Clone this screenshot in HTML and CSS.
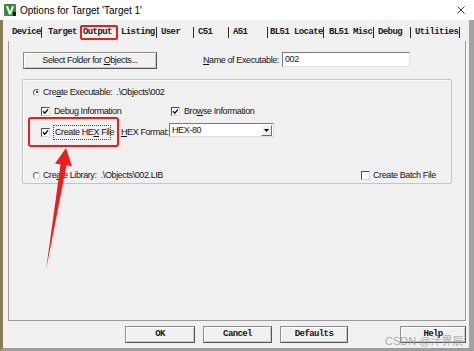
FILE: index.html
```html
<!DOCTYPE html>
<html lang="en">
<head>
    <meta charset="UTF-8">
    <meta name="viewport" content="width=device-width, initial-scale=1.0">
    <title>Options for Target</title>
    <link rel="stylesheet" href="styles.css">
</head>
<body>
    <div class="window">
        <div class="titlebar">
            <svg class="app-icon" viewBox="0 0 12 12">
                <rect x="0" y="0" width="12" height="12" rx="1" fill="#2f8f3f"/>
                <polygon points="2,2 4,2 6,7.5 8,2 10,2 7,10.5 5,10.5" fill="#fff"/>
                <rect x="9" y="8" width="3" height="4" fill="#1d1d1d"/>
            </svg>
            <span class="title">Options for Target 'Target 1'</span>
            <svg class="close" viewBox="0 0 8 8">
                <path d="M0.5 0.5 L7.5 7.5 M7.5 0.5 L0.5 7.5" stroke="#222" stroke-width="0.9"/>
            </svg>
        </div>
        <div class="frame">
            <div class="tabs">
                <span class="tab">Device</span>
                <span class="tab">Target</span>
                <span class="tab active">Output</span>
                <span class="tab">Listing</span>
                <span class="tab">User</span>
                <span class="tab">C51</span>
                <span class="tab">A51</span>
                <span class="tab">BL51 Locate</span>
                <span class="tab">BL51 Misc</span>
                <span class="tab">Debug</span>
                <span class="tab">Utilities</span>
            </div>
            <div class="panel">
                <div class="row-top">
                    <div class="btn btn-folder">Select Folder for <u>O</u>bjects...</div>
                    <span class="lbl-name"><u>N</u>ame of Executable:</span>
                    <div class="input">002</div>
                </div>
                <div class="group">
                    <div class="line">
                        <span class="radio on"></span>
                        <span>Cre<u>a</u>te Executable:&nbsp; .\Objects\002</span>
                    </div>
                    <div class="line line-info">
                        <span class="opt">
                            <span class="check"><svg viewBox="0 0 7 7"><path d="M1 3.2 L2.8 5.2 L6 1.3" stroke="#000" stroke-width="1.3" fill="none"/></svg></span>
                            <span>Debug Information</span>
                        </span>
                        <span class="opt">
                            <span class="check"><svg viewBox="0 0 7 7"><path d="M1 3.2 L2.8 5.2 L6 1.3" stroke="#000" stroke-width="1.3" fill="none"/></svg></span>
                            <span>Bro<u>w</u>se Information</span>
                        </span>
                    </div>
                    <div class="line line-hex">
                        <div class="mark">
                            <span class="check"><svg viewBox="0 0 7 7"><path d="M1 3.2 L2.8 5.2 L6 1.3" stroke="#000" stroke-width="1.3" fill="none"/></svg></span>
                            <span class="focus">Create HE<u>X</u> File</span>
                        </div>
                        <span class="lbl-hex"><u>H</u>EX Format:</span>
                        <div class="combo">
                            <span>HEX-80</span>
                            <span class="combo-btn"><svg viewBox="0 0 5 3"><polygon points="0,0 5,0 2.5,3" fill="#000"/></svg></span>
                        </div>
                    </div>
                    <div class="line line-lib">
                        <span class="radio"></span>
                        <span>Cre<u>a</u>te Library:&nbsp; .\Objects\002.LIB</span>
                        <span class="opt batch">
                            <span class="check"></span>
                            <span>Create Batch File</span>
                        </span>
                    </div>
                </div>
            </div>
            <div class="buttons">
                <div class="btn pb pb-ok">OK</div>
                <div class="btn pb pb-cancel">Cancel</div>
                <div class="btn pb pb-defaults">Defaults</div>
                <div class="btn pb pb-help">Help</div>
            </div>
        </div>
        <svg class="arrow" viewBox="0 0 474 351">
            <polygon points="66,148 72,166.5 66.5,165 46,270 60.5,164.5 55,163.5" fill="#ee1c1c"/>
        </svg>
        <div class="watermark">CSDN @汁界辰</div>
    </div>
</body>
</html>
```

FILE: styles.css
```css
* {
    box-sizing: border-box;
}
body {
    margin: 0;
    background-color: #fff;
}
.window {
    position: relative;
    width: 474px;
    height: 351px;
    overflow: hidden;
    background-color: #f0f0f0;
    font-family: "Liberation Sans", Arial, sans-serif;
    font-size: 9px;
    letter-spacing: -0.4px;
    color: #151515;
}
.titlebar {
    height: 20px;
    background-color: #fff;
    display: flex;
    align-items: center;
    padding-left: 4px;
    letter-spacing: 0;
}
.app-icon {
    width: 12px;
    height: 12px;
}
.title {
    margin-left: 4px;
    font-size: 10px;
    color: #000;
}
.close {
    margin-left: auto;
    margin-right: 9px;
    width: 8px;
    height: 8px;
}
.frame {
    height: 331px;
    border-left: 3px solid #8a7c55;
    border-right: 5px solid #a2a2a2;
    border-bottom: 3px solid #9d9d9d;
    padding: 0 3px 5px 5px;
}

/* tab strip */
.tabs {
    display: flex;
    align-items: center;
    height: 21px;
    padding-top: 4px;
    font-family: "Liberation Mono", "Courier New", monospace;
    font-weight: bold;
    font-size: 9px;
    letter-spacing: -0.6px;
    color: #1a1a1a;
}
.tab {
    height: 11px;
    line-height: 11px;
    padding-left: 4px;
    border-left: 1px solid #2a2a2a;
    white-space: nowrap;
}
.tab:first-child {
    border-left: 0;
}
.tab:last-child {
    border-right: 1px solid #2a2a2a;
}
.tab.active {
    height: 15px;
    margin: 0 1px;
    padding-left: 1px;
    border: 2px solid #e3201b;
    border-radius: 2px;
}
.tab.active + .tab {
    border-left: 0;
    padding-left: 2px;
}
.tab:nth-child(1) { width: 33px; }
.tab:nth-child(2) { width: 38px; padding-left: 6px; }
.tab:nth-child(3) { width: 38px; }
.tab:nth-child(4) { width: 37px; }
.tab:nth-child(5) { width: 37px; }
.tab:nth-child(6) { width: 35px; }
.tab:nth-child(7) { width: 39px; }
.tab:nth-child(8) { width: 56px; padding-left: 2px; }
.tab:nth-child(9) { width: 50px; padding-left: 5px; }
.tab:nth-child(10) { width: 37px; }
.tab:nth-child(11) { width: 50px; }

/* output page */
.panel {
    height: 280px;
    border: 1px solid #9a9a9a;
    border-top: 0;
    padding: 11px 0 0 14px;
    box-shadow: 1px 0 0 #fff;
}
.btn {
    background-color: #f0f0f0;
    border: 1px solid #8e8e8e;
    border-right-color: #555;
    border-bottom-color: #555;
    box-shadow: inset 1px 1px 0 #fff, inset -1px -1px 0 #c9c9c9;
    text-align: center;
    white-space: nowrap;
}
.row-top {
    display: flex;
    align-items: flex-start;
    height: 17px;
}
.btn-folder {
    width: 134px;
    height: 17px;
    line-height: 15px;
}
.lbl-name {
    width: 79px;
    margin-left: 46px;
    line-height: 16px;
    white-space: nowrap;
}
.input {
    width: 128px;
    height: 15px;
    line-height: 13px;
    padding-left: 2px;
    background-color: #fff;
    border: 1px solid;
    border-color: #7a7a7a #e2e2e2 #e2e2e2 #7a7a7a;
}
.group {
    width: 430px;
    height: 105px;
    margin: 10px 0 0 -1px;
    padding: 6px 0 2px 0;
    border: 1px solid #c4c4c4;
    border-radius: 2px;
    box-shadow: inset 1px 1px 0 #fafafa;
}
.line {
    display: flex;
    align-items: center;
    height: 12px;
    white-space: nowrap;
}
.radio {
    position: relative;
    width: 7px;
    height: 7px;
    margin: 0 3px 0 10px;
    border-radius: 50%;
    background-color: #fff;
    border: 1px solid;
    border-color: #5e5e5e #d6d6d6 #d6d6d6 #5e5e5e;
}
.radio.on::after {
    content: "";
    position: absolute;
    left: 1.5px;
    top: 1.5px;
    width: 2px;
    height: 2px;
    border-radius: 50%;
    background-color: #000;
}
.check {
    display: inline-flex;
    align-items: center;
    justify-content: center;
    flex: none;
    width: 9px;
    height: 9px;
    margin-right: 4px;
    background-color: #fff;
    border: 1px solid;
    border-color: #4e4e4e #d8d8d8 #d8d8d8 #4e4e4e;
}
.check svg {
    width: 7px;
    height: 7px;
}
.opt {
    display: flex;
    align-items: center;
}
.line-info {
    margin-top: 7px;
}
.line-info .opt:first-child {
    width: 130px;
    margin-left: 18px;
}
.line-hex {
    height: 30px;
}
.mark {
    display: flex;
    align-items: center;
    width: 91px;
    height: 30px;
    margin-left: 5px;
    padding-left: 11px;
    border: 2px solid #e3201b;
    border-radius: 3px;
}
.mark .check {
    margin-right: 3px;
}
.focus {
    height: 15px;
    width: 58px;
    line-height: 13px;
    padding: 0 1px;
    border: 1px dotted #444;
    white-space: nowrap;
}
.lbl-hex {
    width: 48px;
    margin-left: 2px;
}
.combo {
    display: flex;
    align-items: center;
    width: 105px;
    height: 14px;
    margin-top: -4px;
    padding: 0 1px 0 2px;
    background-color: #fff;
    border: 1px solid;
    border-color: #7a7a7a #dcdcdc #dcdcdc #7a7a7a;
}
.combo-btn {
    display: flex;
    align-items: center;
    justify-content: center;
    width: 11px;
    height: 11px;
    margin-left: auto;
    background-color: #f0f0f0;
    border: 1px solid;
    border-color: #fff #6e6e6e #6e6e6e #fff;
}
.combo-btn svg {
    width: 5px;
    height: 3px;
}
.line-lib {
    margin-top: 22px;
}
.batch {
    width: 90px;
    margin-left: auto;
}
.batch .check {
    margin-right: 3px;
}

/* dialog buttons */
.buttons {
    display: flex;
    height: 17px;
    margin-top: 5px;
    padding-left: 117px;
    font-family: "Liberation Mono", "Courier New", monospace;
    font-weight: bold;
    font-size: 9px;
    letter-spacing: -0.6px;
}
.pb {
    height: 17px;
    line-height: 15px;
}
.pb-ok { width: 70px; }
.pb-cancel { width: 69px; margin-left: 8px; }
.pb-defaults { width: 68px; margin-left: 8px; }
.pb-help { width: 66px; margin-left: 52px; }

/* annotations */
.arrow {
    position: absolute;
    left: 0;
    top: 0;
    width: 474px;
    height: 351px;
    pointer-events: none;
}
.watermark {
    position: absolute;
    left: 385px;
    top: 332px;
    font-family: "Liberation Sans", "Noto Sans CJK SC", sans-serif;
    font-size: 11px;
    letter-spacing: 0;
    color: rgba(160, 160, 160, 0.85);
    white-space: nowrap;
}
```
